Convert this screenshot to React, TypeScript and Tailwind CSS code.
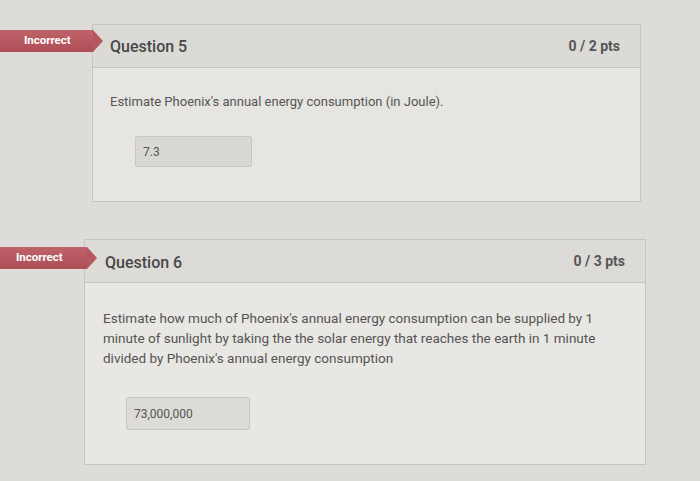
import React from 'react';

function Badge({ className }: { className: string }) {
  return (
    <div className={`absolute left-0 flex items-center ${className}`}>
      <div className="h-[22px] flex items-center bg-gradient-to-b from-[#c0626a] to-[#ad4e56] text-white text-[11.5px] font-bold pr-2">
        Incorrect
      </div>
      <div className="w-0 h-0 border-y-[11px] border-y-transparent border-l-[10px] border-l-[#b6575f]" />
    </div>
  );
}

export default function App() {
  return (
    <div
      className="w-[700px] h-[481px] overflow-hidden bg-[#dddcd8] text-[#4d4d4d] pt-[24px]"
      style={{ fontFamily: 'Roboto, "Liberation Sans", sans-serif' }}
    >
      {/* Question 5 */}
      <div className="relative">
        <Badge className="top-[6px] [&>div:first-child]:pl-[24px] [&>div:first-child]:w-[93px]" />
        <div className="ml-[92px] w-[549px] border border-[#c6c5c1] bg-[#e6e5e1]">
          <div className="h-[43px] flex items-center justify-between bg-[#dbdad6] border-b border-[#c6c5c1] pl-[17px] pr-[20px]">
            <span className="text-[16px] font-medium text-[#484848] mt-[2px]">Question 5</span>
            <span className="text-[14px] font-bold text-[#555]">0 / 2 pts</span>
          </div>
          <div className="pt-[24px] pb-[34px] pl-[17px]">
            <p className="text-[13px] leading-[20px] text-[#555]">
              Estimate Phoenix's annual energy consumption (in Joule).
            </p>
            <div className="mt-[24px] ml-[25px] w-[117px] h-[31px] flex items-center pl-[7px] bg-[#d9d8d4] border border-[#c8c7c3] rounded-[2px] text-[12px] text-[#555]">
              7.3
            </div>
          </div>
        </div>
      </div>

      {/* Question 6 */}
      <div className="relative mt-[37px]">
        <Badge className="top-[8px] [&>div:first-child]:pl-[16px] [&>div:first-child]:w-[87px]" />
        <div className="ml-[84px] w-[562px] border border-[#c6c5c1] bg-[#e8e7e3]">
          <div className="h-[43px] flex items-center justify-between bg-[#dcdbd7] border-b border-[#c6c5c1] pl-[20px] pr-[20px]">
            <span className="text-[16px] font-medium text-[#484848] mt-[4px]">Question 6</span>
            <span className="text-[14px] font-bold text-[#555]">0 / 3 pts</span>
          </div>
          <div className="pt-[25px] pb-[34px] pl-[18px]">
            <p className="text-[13.5px] leading-[20px] text-[#555] w-[520px]">
              Estimate how much of Phoenix's annual energy consumption can be supplied by 1 minute of
              sunlight by taking the the solar energy that reaches the earth in 1 minute divided by
              Phoenix's annual energy consumption
            </p>
            <div className="mt-[29px] ml-[23px] w-[124px] h-[33px] flex items-center pl-[7px] bg-[#dcdbd7] border border-[#c8c7c3] rounded-[2px] text-[12px] text-[#555]">
              73,000,000
            </div>
          </div>
        </div>
      </div>
    </div>
  );
}
